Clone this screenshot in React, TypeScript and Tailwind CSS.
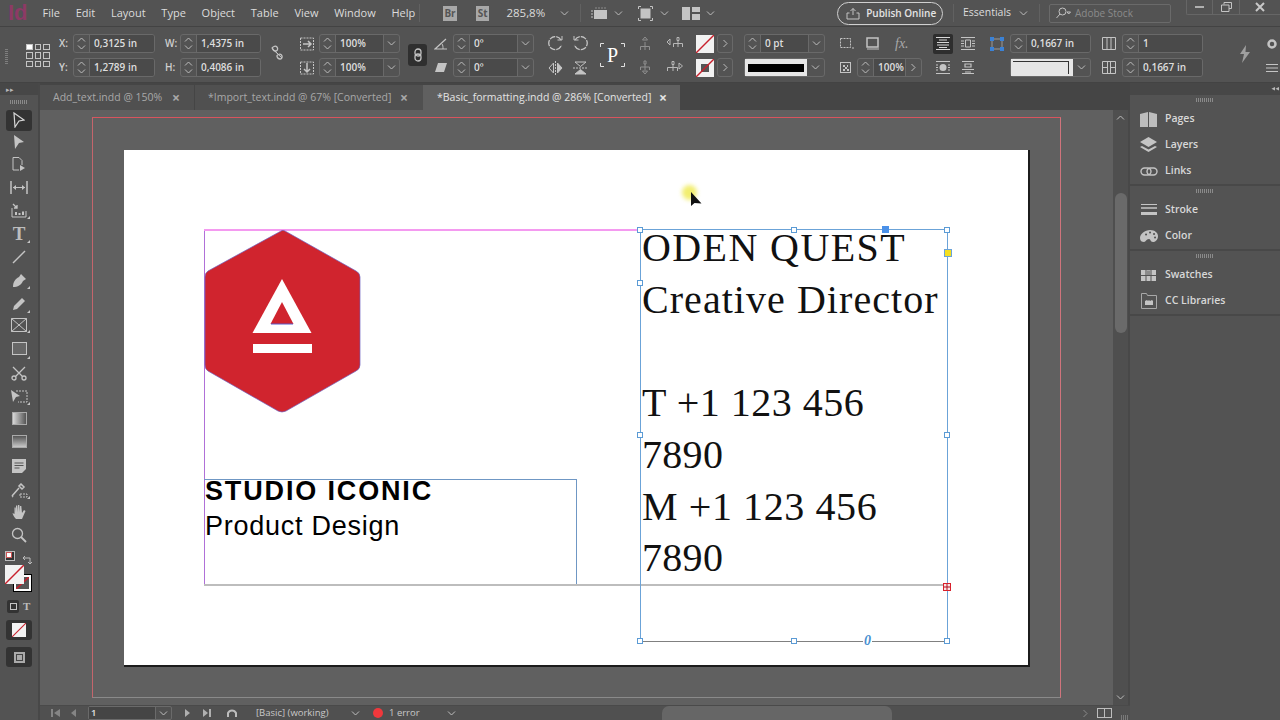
import type { ReactNode } from "react"

const ui = "font-['Open_Sans','Liberation_Sans',sans-serif]"

function Ic({ w = 16, h = 16, vb, children, className = "" }: { w?: number; h?: number; vb?: string; children: ReactNode; className?: string }) {
  return (
    <svg width={w} height={h} viewBox={vb ?? `0 0 ${w} ${h}`} fill="none" stroke="#c4c4c4" strokeWidth="1" className={"shrink-0 " + className}>
      {children}
    </svg>
  )
}

function Chev({ up, className = "" }: { up?: boolean; className?: string }) {
  return (
    <svg width="9" height="5" viewBox="0 0 9 5" fill="none" stroke="#bdbdbd" strokeWidth="1" className={"shrink-0 " + className}>
      <path d={up ? "M1 4.5 4.5 1 8 4.5" : "M1 .5 4.5 4 8 .5"} />
    </svg>
  )
}

function Field({ value, chevron, arrow, w = "w-[81px]" }: { value: string; chevron?: boolean; arrow?: boolean; w?: string }) {
  return (
    <div className={`flex h-[19px] ${w} rounded-[3px] border border-[#696969] overflow-hidden`}>
      <div className="flex w-[16px] shrink-0 flex-col items-center justify-center gap-[3px] border-r border-[#696969]">
        <Chev up />
        <Chev />
      </div>
      <div className="flex flex-1 items-center bg-[#4a4a4a] pl-[4px] text-[10px] font-semibold text-[#dedede]">{value}</div>
      {chevron && (
        <div className="flex w-[16px] shrink-0 items-center justify-center border-l border-[#696969]">
          <Chev />
        </div>
      )}
      {arrow && (
        <div className="flex w-[16px] shrink-0 items-center justify-center border-l border-[#696969]">
          <svg width="5" height="9" viewBox="0 0 5 9" fill="none" stroke="#bdbdbd"><path d="M.5 1 4 4.5.5 8" /></svg>
        </div>
      )}
    </div>
  )
}

function Pair({ className = "", a, b }: { className?: string; a: ReactNode; b: ReactNode }) {
  return (
    <div className={`flex h-[43px] shrink-0 flex-col justify-between ${className}`}>
      <div className="flex h-[19px] items-center">{a}</div>
      <div className="flex h-[19px] items-center">{b}</div>
    </div>
  )
}

function NoneSwatch({ size = 18, inner }: { size?: number; inner?: boolean }) {
  return (
    <svg width={size} height={size} viewBox="0 0 18 18" className="shrink-0">
      <rect width="18" height="18" fill="#f2f2f2" />
      {inner && <rect x="5" y="5" width="8" height="8" fill="#555" />}
      <path d="M0 18 18 0" stroke="#c8202c" strokeWidth="1.4" />
    </svg>
  )
}

function Handle({ className }: { className: string }) {
  return <div className={`absolute h-[6px] w-[6px] border border-[#5b9bd5] bg-white ${className}`} />
}

function Tool({ className = "h-[22px]", corner, children }: { className?: string; corner?: boolean; children: ReactNode }) {
  return (
    <div className={`relative flex w-[38px] items-center justify-center ${className}`}>
      {children}
      {corner && <div className="absolute bottom-[2px] right-[8px] h-0 w-0 border-b-[3px] border-l-[3px] border-b-[#c4c4c4] border-l-transparent" />}
    </div>
  )
}

function PanelItem({ icon, label, className = "h-[26px]" }: { icon: ReactNode; label: string; className?: string }) {
  return (
    <div className={`flex items-center ${className}`}>
      <div className="flex w-[35px] justify-center pl-[2px]">{icon}</div>
      <span className="text-[10.5px] font-semibold text-[#d8d8d8]">{label}</span>
    </div>
  )
}

function Grip() {
  return <div className="mx-auto h-[4px] w-[18px] bg-[repeating-linear-gradient(90deg,#8a8a8a_0,#8a8a8a_1px,transparent_1px,transparent_2px)]" />
}

function TopBar() {
  return (
    <div className="flex h-[27px] shrink-0 items-center whitespace-nowrap border-b border-[#434343] bg-[#535353] text-[11px] text-[#dcdcdc]">
      <span className="ml-[8px] w-[38px] font-['Liberation_Sans',sans-serif] text-[22px] font-bold leading-none text-[#8d3a66]">Id</span>
      <div className="flex gap-[15.750px]">
        <span>File</span><span>Edit</span><span>Layout</span><span>Type</span><span>Object</span><span>Table</span><span>View</span><span>Window</span><span>Help</span>
      </div>
      <div className="ml-[4px] h-[18px] w-px bg-[#616161]" />
      <div className="ml-[23px] flex h-[15px] w-[15px] items-center justify-center bg-[#a8a8a8] text-[10px] font-bold text-[#555]">Br</div>
      <div className="ml-[19px] flex h-[15px] w-[15px] items-center justify-center bg-[#a8a8a8] text-[10px] font-bold text-[#555]">St</div>
      <span className="ml-[17px] w-[40px] text-[11.5px]">285,8%</span>
      <Chev className="ml-[15px]" />
      <div className="ml-[11px] h-[18px] w-px bg-[#616161]" />
      <Ic w={18} h={14} className="ml-[9px]"><rect x="4" y="4" width="13" height="9" fill="#c4c4c4" stroke="none" /><path d="M1 5h2M1 8h2M1 11h2M6 1.500v1M9 1.500v1M12 1.500v1M15 1.500v1" /></Ic>
      <Chev className="ml-[6px]" />
      <Ic w={15} h={15} className="ml-[15px]"><rect x="2.500" y="2.500" width="10" height="10" fill="#c4c4c4" stroke="none" /><path d="M.5 3V.5H3M12 .5h2.500V3M14.500 12v2.500H12M3 14.500H.5V12" /></Ic>
      <Chev className="ml-[7px]" />
      <Ic w={18} h={13} className="ml-[13px]"><path d="M0 0h8v13H0zM10 0h8v5h-8zM10 7h8v6h-8z" fill="#c4c4c4" stroke="none" /></Ic>
      <Chev className="ml-[6px]" />
      <div className="ml-[122px] flex h-[23px] w-[106px] shrink-0 items-center rounded-full border border-[#d0d0d0] pl-[8px] text-[#e4e4e4]">
        <Ic w={14} h={13}><path d="M7 8V1.500M4.500 4 7 1.500 9.500 4M3.500 6H1v6h12V6h-2.500" /></Ic>
        <span className="ml-[6px] text-[10px] font-semibold">Publish Online</span>
      </div>
      <div className="ml-[10px] h-[18px] w-px bg-[#616161]" />
      <span className="ml-[9px] w-[50px] text-[10.5px] font-medium">Essentials</span>
      <Chev className="ml-[8px]" />
      <div className="ml-[11px] h-[18px] w-px bg-[#616161]" />
      <div className="ml-[9px] flex h-[19px] w-[122px] shrink-0 items-center rounded-[2px] border border-[#6a6a6a] pl-[5px] text-[10px] text-[#8b8b8b]">
        <Ic w={16} h={12}><circle cx="7.500" cy="4.500" r="3.500" /><path d="M5 7 1.500 11M12 5h3.500L13.700 7z" /></Ic>
        <span className="ml-[4px]">Adobe Stock</span>
      </div>
      <div className="ml-[15px] flex h-[15px] self-start">
        <div className="flex w-[26px] items-center justify-center rounded-bl-[2px] border-b border-l border-[#666]"><div className="h-[2px] w-[9px] bg-[#b0b0b0]" /></div>
        <div className="flex w-[27px] items-center justify-center border-b border-l border-[#666]">
          <Ic w={11} h={10}><path d="M3 2.500V.5h7.500v6H8M.5 3h7.500v6.500H.5z" /></Ic>
        </div>
        <div className="flex w-[41px] items-center justify-center border-b border-l border-[#666]">
          <Ic w={10} h={10}><path d="M1 1l8 8M9 1 1 9" stroke="#c8c8c8" strokeWidth="2" /></Ic>
        </div>
      </div>
    </div>
  )
}

function ControlBar() {
  const proxy = [0, 1, 2, 3, 4, 5, 6, 7, 8]
  return (
    <div className="flex h-[56px] shrink-0 items-center border-b border-[#434343] bg-[#535353] pt-[2px] text-[10px] font-semibold text-[#cfcfcf]">
      <div className="ml-[5px] h-[16px] w-[3px] bg-[repeating-linear-gradient(0deg,#7e7e7e_0,#7e7e7e_1px,transparent_1px,transparent_2px)]" />
      <div className="ml-[18px] grid w-[24px] grid-cols-3 gap-[2px]">
        {proxy.map((i) => (
          <div key={i} className={`h-[6.500px] border border-[#c4c4c4] ${i === 0 ? "bg-white" : ""}`} />
        ))}
      </div>
      <Pair className="ml-[9px] w-[14px]" a={<span>X:</span>} b={<span>Y:</span>} />
      <Pair a={<Field value="0,3125 in" w="w-[82px]" />} b={<Field value="1,2789 in" w="w-[82px]" />} />
      <Pair className="ml-[10px] w-[15px]" a={<span>W:</span>} b={<span>H:</span>} />
      <Pair a={<Field value="1,4375 in" />} b={<Field value="0,4086 in" />} />
      <Ic w={14} h={16} className="mb-[5px] ml-[9px]"><path d="M4 1.500c1.500-1 3 0 3.500 1.500s-.5 3-2 3-2.500-1-3-2.500.5-1.500 1.500-2zM8.500 9.500c1.500-1 3 0 3.500 1.500s-.5 3-2 3-2.500-1-3-2.500.5-1.500 1.500-2z" strokeWidth="1.300" /><path d="M5 6l4 4M1.500 3 12 13" strokeWidth="1" /></Ic>
      <Pair
        className="ml-[16px] w-[14px]"
        a={<Ic w={14} h={14}><path d="M.5 1h13v12H.5z" strokeDasharray="2 1" /><path d="M3 7h8M8 4l3 3-3 3" strokeWidth="1.500" /></Ic>}
        b={<Ic w={14} h={14}><path d="M.5 1h13v12H.5z" strokeDasharray="2 1" /><path d="M7 2v9M4 8l3 3 3-3" strokeWidth="1.500" /></Ic>}
      />
      <Pair className="ml-[5px]" a={<Field value="100%" chevron />} b={<Field value="100%" chevron />} />
      <div className="mb-[2px] ml-[8px] flex h-[22px] w-[19px] items-center justify-center rounded-[3px] bg-[#2f2f2f]">
        <Ic w={8} h={14} vb="0 0 8 14"><rect x="1" y="1" width="6" height="7" rx="3" strokeWidth="1.300" /><rect x="1" y="6" width="6" height="7" rx="3" strokeWidth="1.300" /></Ic>
      </div>
      <Pair
        className="ml-[7px] w-[14px]"
        a={<Ic w={14} h={12}><path d="M12 1 1 11h12" strokeWidth="1.200" /><path d="M8 6c1 1 1 3 1 5" /></Ic>}
        b={<Ic w={14} h={11}><path d="M4 1h9l-3 9H1z" fill="#c4c4c4" stroke="none" /></Ic>}
      />
      <Pair className="ml-[5px]" a={<Field value="0º" chevron />} b={<Field value="0º" chevron />} />
      <Pair
        className="ml-[14px] w-[40px]"
        a={
          <div className="flex w-full justify-between">
            <Ic w={15} h={15}><path d="M13 4a6.500 6.500 0 1 0 .5 5" strokeWidth="1.300" strokeDasharray="6 1" /><path d="M9.500 4H14V0" /></Ic>
            <Ic w={15} h={15}><path d="M2 4a6.500 6.500 0 1 1-.5 5" strokeWidth="1.300" strokeDasharray="6 1" /><path d="M5.500 4H1V0" /></Ic>
          </div>
        }
        b={
          <div className="flex w-full justify-between">
            <Ic w={15} h={14}><path d="M7.500 0v14" strokeDasharray="2 1" /><path d="M5.500 2v10L1 7z" /><path d="M9.500 2v10L14 7z" fill="#c4c4c4" /></Ic>
            <Ic w={15} h={14}><path d="M0 7h15" strokeDasharray="2 1" /><path d="M2 1h11L7.500 5.500z" /><path d="M2 13h11L7.500 8.500z" fill="#c4c4c4" /></Ic>
          </div>
        }
      />
      <div className="relative mb-[2px] ml-[12px] flex h-[24px] w-[25px] items-center justify-center font-['Liberation_Serif',serif] text-[20px] font-normal leading-none text-white">
        P
        <Ic w={25} h={24} className="absolute left-0 top-0"><path d="M.5 4V.5H4M21 .5h3.500V4M24.500 20v3.500H21M4 23.500H.5V20" stroke="#e0e0e0" /></Ic>
      </div>
      <Pair
        className="ml-[13px] w-[46px]"
        a={
          <div className="flex w-full justify-between">
            <Ic w={14} h={15}><path d="M7 1 4.500 4h5zM7 6v3M2.500 14v-3.500h9V14M7 9v5" stroke="#8f8f8f" /></Ic>
            <Ic w={18} h={13}><path d="M4 3 1 6l3 3zM11 1.500h2v3h-2zM12 4.500v3M7.500 11V7.500h9V11M12 7.500V11" stroke="#b8b8b8" /></Ic>
          </div>
        }
        b={
          <div className="flex w-full justify-between">
            <Ic w={14} h={15}><path d="M6 1h2v3H6zM7 4v3M2.500 10V7h9v3M7 7v3M4.500 11h5L7 14z" stroke="#8f8f8f" /></Ic>
            <Ic w={18} h={13}><path d="M13 3l3.500 3L13 9zM6 1.500h2v3H6zM7 4.500v3M1.500 11V7.500h10V11M7 7.500V11" stroke="#b8b8b8" /></Ic>
          </div>
        }
      />
      <Pair className="ml-[12px] w-[37px]"
        a={<div className="flex items-center gap-[3px]"><NoneSwatch /><div className="flex h-[19px] w-[16px] items-center justify-center rounded-[3px] border border-[#696969]"><svg width="5" height="9" viewBox="0 0 5 9" fill="none" stroke="#bdbdbd"><path d="M.5 1 4 4.500.5 8" /></svg></div></div>}
        b={<div className="flex items-center gap-[3px]"><NoneSwatch inner /><div className="flex h-[19px] w-[16px] items-center justify-center rounded-[3px] border border-[#696969]"><svg width="5" height="9" viewBox="0 0 5 9" fill="none" stroke="#bdbdbd"><path d="M.5 1 4 4.500.5 8" /></svg></div></div>}
      />
      <Pair
        className="ml-[11px]"
        a={<Field value="0 pt" chevron />}
        b={
          <div className="flex h-[19px] w-[81px] rounded-[3px] border border-[#696969]">
            <div className="flex flex-1 items-center justify-center bg-[#e6e6e6]"><div className="h-[8px] w-[56px] bg-black" /></div>
            <div className="flex w-[17px] items-center justify-center"><Chev /></div>
          </div>
        }
      />
      <Pair
        className="ml-[13px] w-[82px]"
        a={
          <div className="flex items-center">
            <Ic w={15} h={13} className="ml-[1px]"><rect x="1.500" y="1.500" width="10" height="9" strokeDasharray="2 1" /><path d="M13 11h2" /></Ic>
            <Ic w={14} h={14} className="ml-[12px]"><rect x="1" y="1" width="11" height="9" strokeWidth="1.500" /><rect x="1" y="11" width="12" height="2" fill="#8a8a8a" stroke="none" /></Ic>
            <span className="ml-[15px] font-['Liberation_Serif',serif] text-[14px] font-normal italic leading-none text-[#a8a8a8]">fx.</span>
          </div>
        }
        b={
          <div className="flex items-center">
            <Ic w={11} h={11} className="mr-[6px] ml-[2px]"><rect x=".5" y=".5" width="10" height="10" /><path d="M3 3h2v2H3zM7 3h1v2H7zM5 5h2v2H5zM3 7h2v2H3zM7 7h2v2H7z" fill="#c4c4c4" stroke="none" /></Ic>
            <Field value="100%" arrow w="w-[65px]" />
          </div>
        }
      />
      <Pair
        className="ml-[13px] w-[45px]"
        a={
          <div className="flex w-full items-center justify-between">
            <div className="flex h-[20px] w-[20px] items-center justify-center rounded-[2px] bg-[#2e2e2e]"><Ic w={14} h={13}><path d="M0 .5h14M3 3h8M1 5.500h12M1 8h12M3 10.500h8M0 12.500h14" stroke="#d8d8d8" /></Ic></div>
            <Ic w={14} h={13} className="mr-[3px]"><path d="M0 .5h14M0 12.500h14M4.500 3h5v7h-5zM0 4h3M0 6.500h3M0 9h3M11 4h3M11 6.500h3M11 9h3" /></Ic>
          </div>
        }
        b={
          <div className="flex w-full items-center justify-between">
            <Ic w={14} h={13} className="ml-[3px]"><circle cx="7" cy="6.500" r="3.500" fill="#c4c4c4" stroke="none" /><path d="M0 .5h14M0 12.500h14M0 4h2M0 6.500h2M0 9h2M12 4h2M12 6.500h2M12 9h2" /></Ic>
            <Ic w={14} h={13} className="mr-[3px]"><path d="M1 .5h12M4 3h6v3H4zM1 8.500h12M4 11h6M1 12.500h12" strokeWidth="1.200" /></Ic>
          </div>
        }
      />
      <Pair
        className="ml-[12px] w-[16px]"
        a={<Ic w={14} h={14}><path d="M3 2h8M3 12h8M2 3v8M12 3v8" stroke="#9a9a9a" /><path d="M0 0h4v4H0zM10 0h4v4h-4zM0 10h4v4H0zM10 10h4v4h-4z" fill="#3b82d6" stroke="none" /></Ic>}
        b={<span />}
      />
      <Pair
        className="ml-[4px]"
        a={<Field value="0,1667 in" />}
        b={
          <div className="flex h-[19px] w-[81px] rounded-[3px] border border-[#696969]">
            <div className="relative flex-1 bg-[#e6e6e6]">
              <div className="absolute right-[4px] top-[2px] h-[13px] w-[56px] border-r border-t border-[#333]" />
            </div>
            <div className="flex w-[17px] items-center justify-center"><Chev /></div>
          </div>
        }
      />
      <Pair
        className="ml-[11px] w-[16px]"
        a={<Ic w={14} h={13}><path d="M.5 .5h13v12H.5zM5 .5v12M9 .5v12" /></Ic>}
        b={<Ic w={14} h={13}><path d="M.5 .5h13v12H.5zM5.500 .5v12M8.500 .5v12M.5 6.500h5M8.500 6.500h5" /></Ic>}
      />
      <Pair className="ml-[4px]" a={<Field value="1" />} b={<Field value="0,1667 in" />} />
      <Ic w={12} h={18} className="mb-[4px] ml-[36px]"><path d="M7 0 1 9h4l-2 9 8-11H6.500z" fill="#9f9f9f" stroke="none" /></Ic>
      <Pair
        className="ml-[15px] w-[12px]"
        a={<Ic w={12} h={12}><circle cx="6" cy="6" r="3.500" strokeWidth="2.500" /></Ic>}
        b={<Ic w={12} h={10}><path d="M0 1.500h12M0 5h12M0 8.500h12" /></Ic>}
      />
    </div>
  )
}

function Toolbox() {
  return (
    <div className="flex w-[40px] shrink-0 flex-col border-r-2 border-[#484848] bg-[#535353]">
      <div className="flex h-[12px] items-center bg-[#474747] pl-[6px]">
        <span className="text-[7px] leading-none text-[#b8b8b8]">▸▸</span>
      </div>
      <div className="flex h-[14px] items-center"><Grip /></div>
      <Tool>
        <div className="flex h-[21px] w-[26px] items-center justify-center rounded-[3px] bg-[#333]">
          <Ic w={12} h={16}><path d="M1 1l10 7-5 1-4 6z" stroke="#d6d6d6" strokeWidth="1.200" /></Ic>
        </div>
      </Tool>
      <Tool><Ic w={12} h={16}><path d="M1 1l10 7-5 1-4 6z" fill="#c4c4c4" stroke="none" /></Ic></Tool>
      <Tool><Ic w={14} h={15}><path d="M1 .5h6l3 3V8M1 .5V13h6" /><path d="M8 8l5 3-5 3z" fill="#c4c4c4" stroke="none" /></Ic></Tool>
      <Tool className="h-[24px]"><Ic w={18} h={13}><path d="M1 0v13M17 0v13" strokeWidth="1.500" /><path d="M3 6.500h12" /><path d="M6 4 3 6.500 6 9zM12 4l3 2.500L12 9z" fill="#c4c4c4" stroke="none" /></Ic></Tool>
      <Tool corner><Ic w={16} h={15}><path d="M1 5v9h14V8" /><path d="M2 1l4 4M6 2v3H3" strokeWidth="1.300" /><path d="M4 9h2v3H4zM7.500 10h2v2h-2zM11 8.500h2V12h-2z" fill="#c4c4c4" stroke="none" /></Ic></Tool>
      <Tool corner className="h-[24px]"><span className="font-['Liberation_Serif',serif] text-[19px] font-bold leading-none text-[#bdbdbd]">T</span></Tool>
      <Tool className="h-[24px]"><Ic w={14} h={14}><path d="M1 13 13 1" strokeWidth="1.400" /></Ic></Tool>
      <Tool corner><Ic w={15} h={15}><path d="M1 14c0-5 2-8 6-10l4 4c-2 4-5 6-10 6zM7 4l2-3 5 5-3 2" fill="#c4c4c4" stroke="none" /></Ic></Tool>
      <Tool corner className="h-[24px]"><Ic w={15} h={15}><path d="M1 14l1-4 8-8 3 3-8 8z" fill="#c4c4c4" stroke="none" /></Ic></Tool>
      <Tool corner className="h-[20px]"><Ic w={16} h={14}><path d="M.5 .5h15v13H.5zM.5 .5l15 13M15.500 .5l-15 13" /></Ic></Tool>
      <Tool corner className="h-[26px]"><div className="h-[13px] w-[15px] border border-[#c4c4c4] bg-[#676767]" /></Tool>
      <Tool className="h-[24px]"><Ic w={16} h={15}><circle cx="3" cy="12" r="2" strokeWidth="1.300" /><circle cx="13" cy="12" r="2" strokeWidth="1.300" /><path d="M4.500 10.500 14 1M11.500 10.500 2 1" strokeWidth="1.300" /></Ic></Tool>
      <Tool corner><Ic w={18} h={15}><path d="M1 1l9 6-4 1-3 5z" fill="#c4c4c4" stroke="none" /><path d="M6 2h11v11H8" strokeDasharray="2 1" /></Ic></Tool>
      <Tool><div className="h-[13px] w-[15px] border border-[#aaa] bg-[linear-gradient(90deg,#d8d8d8,#555)]" /></Tool>
      <Tool className="h-[24px]"><div className="h-[13px] w-[15px] border border-[#aaa] bg-[linear-gradient(180deg,#555,#c8c8c8)]" /></Tool>
      <Tool className="h-[26px]"><Ic w={14} h={14}><path d="M0 0h14v10l-4 4H0z" fill="#c4c4c4" stroke="none" /><path d="M2.500 4h9M2.500 6.500h9M2.500 9h5" stroke="#555" /></Ic></Tool>
      <Tool corner><Ic w={18} h={15}><path d="M2 13l7-8M9 3l3 3M11 1l3 3-2 2-3-3zM2 13l1 1" strokeWidth="1.500" /><path d="M10 11h7v3h-7z" strokeDasharray="2 1" /></Ic></Tool>
      <Tool><Ic w={15} h={16}><path d="M4 15c-2-2-3-4-3.500-6l2 1V3.500h1.200L4 8V1.500h1.300L6 8V1h1.300L8 8V2h1.300L10 9l2-3 1.500 1L10 15z" fill="#c4c4c4" stroke="none" /></Ic></Tool>
      <Tool className="h-[24px]"><Ic w={16} h={16}><circle cx="6.500" cy="6.500" r="5" strokeWidth="1.300" /><path d="M10 10l5 5" strokeWidth="1.800" /></Ic></Tool>
      <div className="relative h-[124px]">
        <div className="absolute left-[5px] top-[4px] h-[10px] w-[10px] border border-[#bbb] bg-[#333]"><div className="h-[6px] w-[6px] border border-[#c55] bg-white" /></div>
        <svg width="12" height="10" viewBox="0 0 12 10" fill="none" stroke="#bdbdbd" className="absolute left-[22px] top-[8px]"><path d="M1 3h7v6M3 1 1 3l2 2M6 7l2 2 2-2" /></svg>
        <div className="absolute left-[13px] top-[27px] h-[18px] w-[19px] border border-black bg-white p-[2px]">
          <svg width="13" height="12" viewBox="0 0 13 12"><rect width="13" height="12" fill="#555" /><path d="M0 12 13 0" stroke="#c8202c" strokeWidth="1.500" /></svg>
        </div>
        <div className="absolute left-[5px] top-[18px]"><NoneSwatch size={19} /></div>
        <div className="absolute left-[7px] top-[53px] flex h-[13px] w-[12px] items-center justify-center rounded-[2px] bg-[#333]"><div className="h-[7px] w-[7px] border border-[#c4c4c4]" /></div>
        <span className="absolute left-[23px] top-[52px] font-['Liberation_Serif',serif] text-[11px] font-bold leading-[14px] text-[#bdbdbd]">T</span>
        <div className="absolute left-[6px] top-[73px] flex h-[20px] w-[26px] items-center justify-center rounded-[3px] bg-[#333]"><NoneSwatch size={14} /></div>
        <div className="absolute left-[6px] top-[100px] flex h-[20px] w-[26px] items-center justify-center rounded-[3px] bg-[#333]">
          <Ic w={11} h={11}><rect width="11" height="11" fill="#aaa" stroke="none" /><rect x="2.500" y="2.500" width="6" height="6" stroke="#444" /></Ic>
        </div>
      </div>
    </div>
  )
}

function Page() {
  return (
    <div className="absolute left-[84px] top-[40px] h-[515px] w-[904px] bg-white shadow-[1px_1px_0_1px_#1c1c1c]">
      {/* guides and frames */}
      <div className="absolute left-[80px] top-[80px] h-[355px] w-px bg-[#b070d8]" />
      <div className="absolute left-[80px] top-[79px] h-[2px] w-[436px] bg-[#f49af0]" />
      <div className="absolute left-[80px] top-[329px] h-[106px] w-[373px] border-b border-r border-t border-[#6f97c4]" />
      <div className="absolute left-[80px] top-[434px] h-[2px] w-[743px] bg-[#bdbdbd]" />

      <svg width="158" height="184" viewBox="0 0 158 184" className="absolute left-[80px] top-[80px]">
        <path d="M78 .5 Q79 0 81 1 L152 41 Q156 43 156 47 L156 135 Q156 139 152 141 L82 181 Q78 183 74 181 L4 141 Q1 139 1 135 L1 47 Q1 43 4 41 Z" fill="#d0242e" stroke="#6f62c0" strokeWidth=".7" />
        <path d="M78 49 107.500 103H48.500Z" fill="#fff" />
        <path d="M78 72 89.500 94H66.500Z" fill="#d0242e" />
        <path d="M67 94H89" stroke="#5a58c8" strokeWidth="1" />
        <path d="M49 114h59v9H49Z" fill="#fff" />
      </svg>

      <div className="absolute left-[81px] top-[323px] font-['Liberation_Sans',sans-serif] text-[27px] text-black">
        <div className="font-bold leading-[36px] tracking-[1.850px]">STUDIO ICONIC</div>
        <div className="leading-[34px] tracking-[.75px]">Product Design</div>
      </div>

      <div className="absolute left-[518px] top-[72px] whitespace-pre font-['Liberation_Serif',serif] text-[40px] leading-[51.700px] text-[#111]">
        <div className="tracking-[1.400px]">ODEN QUEST</div>
        <div className="tracking-[1.050px]">Creative Director</div>
        <div>&nbsp;</div>
        <div className="tracking-[.5px]">T +1 123 456</div>
        <div className="tracking-[.3px]">7890</div>
        <div className="tracking-[.6px]">M +1 123 456</div>
        <div className="tracking-[.3px]">7890</div>
      </div>

      {/* selected frame */}
      <div className="absolute left-[516px] top-[79px] h-[412px] w-[308px] border-x border-t border-[#6ba3d8]" />
      <div className="absolute left-[516px] top-[491px] h-px w-[308px] bg-[#808080]" />
      <Handle className="left-[513px] top-[77px]" />
      <Handle className="left-[667px] top-[77px]" />
      <Handle className="left-[820px] top-[77px]" />
      <Handle className="left-[513px] top-[130px]" />
      <Handle className="left-[513px] top-[282px]" />
      <Handle className="left-[820px] top-[282px]" />
      <Handle className="left-[513px] top-[488px]" />
      <Handle className="left-[667px] top-[488px]" />
      <Handle className="left-[820px] top-[488px]" />
      <div className="absolute left-[758px] top-[76px] h-[7px] w-[7px] bg-[#4a90e8]" />
      <div className="absolute left-[820px] top-[99px] h-[8px] w-[8px] border border-[#6ba3d8] bg-[#f4e020]" />
      <div className="absolute left-[819px] top-[433px] flex h-[8px] w-[8px] items-center justify-center border border-[#d8202c] bg-[#fbe4e4]">
        <svg width="6" height="6" viewBox="0 0 6 6" stroke="#b01020"><path d="M3 0v6M0 3h6" /></svg>
      </div>
      <span className="absolute left-[739px] top-[483px] bg-white px-px font-['Liberation_Serif',serif] text-[14px] font-bold italic leading-[16px] text-[#4a8fd0]">0</span>

      {/* cursor */}
      <div className="absolute left-[558px] top-[35px] h-[15px] w-[15px] rounded-full bg-[#f2ee70] blur-[2px]" />
      <svg width="12" height="15" viewBox="0 0 12 15" className="absolute left-[566px] top-[42px]"><path d="M1 0v14l3.500-3 7 .5z" fill="#111" /></svg>
    </div>
  )
}

function Workspace() {
  return (
    <div className="flex min-w-0 flex-1 flex-col">
      {/* tabs */}
      <div className="flex h-[27px] shrink-0 bg-[#454545] pt-[2px] text-[10.500px] font-medium">
        <div className="flex w-[155px] items-center border-r border-[#454545] bg-[#505050] pl-[13px] text-[#a8a8a8]">
          <span className="w-[112px]">Add_text.indd @ 150%</span>
          <span className="ml-[7px] text-[14px] font-bold leading-none">×</span>
        </div>
        <div className="flex w-[228px] items-center bg-[#505050] pl-[13px] text-[#a8a8a8]">
          <span className="w-[186px]">*Import_text.indd @ 67% [Converted]</span>
          <span className="ml-[6px] text-[14px] font-bold leading-none">×</span>
        </div>
        <div className="flex w-[257px] items-center bg-[#606060] pl-[14px] text-[#e4e4e4]">
          <span className="w-[216px]">*Basic_formatting.indd @ 286% [Converted]</span>
          <span className="ml-[6px] text-[14px] font-bold leading-none">×</span>
        </div>
      </div>
      <div className="flex min-h-0 flex-1">
        <div className="relative flex-1 bg-[#606060]">
          <div className="absolute left-[52px] top-[7px] h-[581px] w-[969px] border border-b-[#8a8a8a] border-l-[#c4656c] border-r-[#d0747c] border-t-[#d8545e]" />
          <Page />
        </div>
        <div className="relative flex w-[17px] shrink-0 flex-col items-center border-r-2 border-[#484848] bg-[#4f4f4f]">
          <Chev up className="mt-[5px]" />
          <div className="mt-[73px] h-[140px] w-[12px] rounded-full bg-[#6a6a6a]" />
          <Chev className="mt-auto mb-[5px]" />
        </div>
      </div>
      {/* status bar */}
      <div className="flex h-[15px] shrink-0 items-center whitespace-nowrap border-t border-[#4a4a4a] bg-[#505050] pr-[2px] text-[9.500px] font-medium text-[#c8c8c8]">
        <svg width="9" height="8" viewBox="0 0 9 8" fill="#858585" className="ml-[11px] shrink-0"><path d="M0 0h2v8H0zM9 0v8L3 4z" /></svg>
        <svg width="5" height="8" viewBox="0 0 5 8" fill="#858585" className="ml-[11px] shrink-0"><path d="M5 0v8L0 4z" /></svg>
        <div className="ml-[12px] flex h-[14px] w-[84px] shrink-0 rounded-[2px] border border-[#6a6a6a]">
          <div className="flex-1 bg-[#454545] pl-[2px] font-semibold leading-[12px] text-[#e0e0e0]">1</div>
          <div className="flex w-[16px] items-center justify-center border-l border-[#6a6a6a]"><Chev /></div>
        </div>
        <svg width="5" height="8" viewBox="0 0 5 8" fill="#b0b0b0" className="ml-[13px] shrink-0"><path d="M0 0v8l5-4z" /></svg>
        <svg width="8" height="8" viewBox="0 0 8 8" fill="#b0b0b0" className="ml-[13px] shrink-0"><path d="M0 0v8l5-4zM6 0h2v8H6z" /></svg>
        <svg width="13" height="12" viewBox="0 0 13 12" fill="none" stroke="#bdbdbd" strokeWidth="2" className="ml-[15px] shrink-0"><path d="M2 10V6a4.500 4.500 0 0 1 8 0v4" /></svg>
        <span className="ml-[17px] w-[95px] shrink-0">[Basic] (working)</span>
        <Chev />
        <div className="ml-[13px] h-[10px] w-[10px] shrink-0 rounded-full bg-[#f0383c]" />
        <span className="ml-[6px] w-[58px] shrink-0">1 error</span>
        <Chev />
        <div className="ml-[206px] h-full w-[230px] shrink-0 rounded-t-[7px] bg-[#666]" />
        <div className="flex-1" />
        <svg width="5" height="9" viewBox="0 0 5 9" fill="none" stroke="#8a8a8a" className="shrink-0"><path d="M.5 1 4 4.500.5 8" /></svg>
        <div className="ml-[9px] flex h-[10px] w-[15px] shrink-0 border border-[#bdbdbd]"><div className="w-1/2 border-r border-[#bdbdbd]" /></div>
        <div className="ml-[9px] h-[5px] w-[7px] shrink-0 self-end bg-[repeating-linear-gradient(90deg,#7a7a7a_0,#7a7a7a_1px,transparent_1px,transparent_2px)]" />
      </div>
    </div>
  )
}

function Panels() {
  return (
    <div className="flex w-[150px] shrink-0 flex-col bg-[#535353]">
      <div className="flex h-[12px] shrink-0 items-center justify-end bg-[#474747] pr-[1px]">
        <span className="rotate-180 text-[7px] leading-none text-[#b8b8b8]">▸▸</span>
      </div>
      <div className="border-b-2 border-[#484848]">
        <div className="flex h-[7px] items-end"><Grip /></div>
        <div className="pt-[4px]">
          <PanelItem label="Pages" icon={<Ic w={17} h={18}><path d="M0 4l8-2v15H0zM9 2l8 2v13H9z" fill="#bdbdbd" stroke="none" /></Ic>} />
          <PanelItem label="Layers" icon={<Ic w={17} h={16}><path d="M8.500 0 17 5l-8.500 5L0 5z" fill="#c4c4c4" stroke="none" /><path d="M2 9 0 10l8.500 5 8.500-5-2-1-6.500 3.500z" fill="#c4c4c4" stroke="none" /></Ic>} />
          <PanelItem label="Links" icon={<Ic w={18} h={9}><rect x="1" y="1" width="10" height="7" rx="3.500" strokeWidth="1.400" /><rect x="7" y="1" width="10" height="7" rx="3.500" strokeWidth="1.400" /></Ic>} />
        </div>
      </div>
      <div className="border-b-2 border-[#484848]">
        <div className="flex h-[7px] items-end"><Grip /></div>
        <div className="pt-[4px]">
          <PanelItem label="Stroke" icon={<Ic w={16} h={12}><path d="M0 .5h16" /><path d="M0 4h16" strokeWidth="1.500" /><path d="M0 9.500h16" strokeWidth="3" /></Ic>} />
          <PanelItem label="Color" icon={<Ic w={18} h={14}><path d="M0 9c0-4 5-8 10-8s8 3 8 6c0 4-3 6-5 6-3 0-2-3-4-3-3 0-3 3-5 3S0 12 0 9z" fill="#c4c4c4" stroke="none" /><path d="M6 5.500h.1M10 3.500h.1M14 5h.1M15 8.500h.1" stroke="#555" strokeWidth="2" strokeLinecap="round" /></Ic>} />
        </div>
      </div>
      <div className="border-b-2 border-[#484848]">
        <div className="flex h-[7px] items-end"><Grip /></div>
        <div className="pt-[4px]">
          <PanelItem label="Swatches" icon={<Ic w={15} h={11}><path d="M0 0h15v11H0z" fill="#c4c4c4" stroke="none" /><path d="M5 0v11M10 0v11M0 5.500h15" stroke="#535353" /><path d="M5.500 .5h4v4.500h-4z" fill="#8a8a8a" stroke="none" /></Ic>} />
          <PanelItem label="CC Libraries" icon={<Ic w={16} h={16}><path d="M.5.5h5l1 2h9v13H.5z" stroke="#a8a8a8" /><path d="M4 12V8l2-1 1 1 1-1 1 1 2-1 1 1v4z" fill="#c4c4c4" stroke="none" /></Ic>} />
        </div>
      </div>
    </div>
  )
}

export default function App() {
  return (
    <div className={`flex h-[720px] w-[1280px] flex-col overflow-hidden bg-[#535353] ${ui}`}>
      <TopBar />
      <ControlBar />
      <div className="flex min-h-0 flex-1">
        <Toolbox />
        <Workspace />
        <Panels />
      </div>
    </div>
  )
}
